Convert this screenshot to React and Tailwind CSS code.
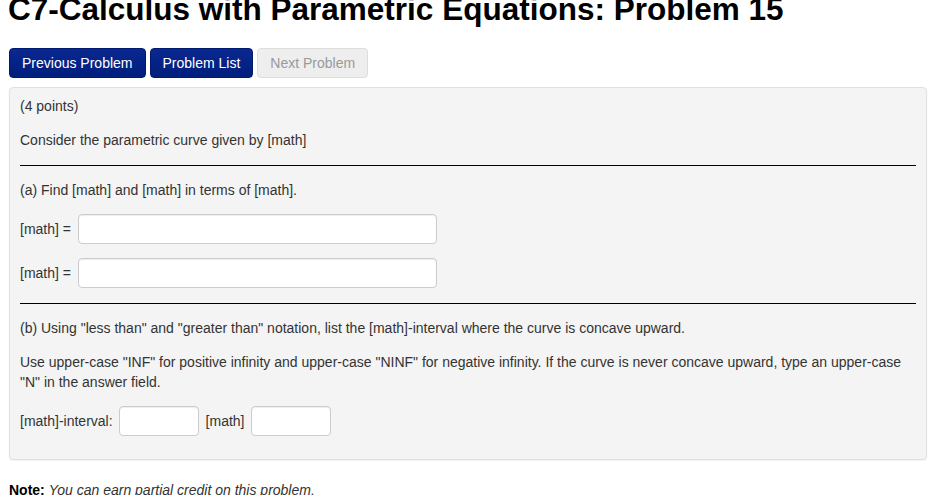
import React from 'react'

const font = { fontFamily: '"Liberation Sans", Arial, sans-serif' }

function Field({ className = 'w-[359px]' }) {
  return (
    <input
      type="text"
      className={`h-[30px] rounded-[4px] border border-[#cccccc] bg-white px-2 text-[14px] shadow-[inset_0_1px_1px_rgba(0,0,0,0.075)] outline-none ${className}`}
    />
  )
}

export default function App() {
  return (
    <div className="min-h-screen bg-white pl-[9px] pr-[3px] text-[14px] leading-[20px] text-[#333333]" style={font}>
      <h2 className="-mt-[7px] ml-[-1px] whitespace-nowrap text-[31.5px] font-bold leading-[32px] text-black">
        C7-Calculus with Parametric Equations: Problem 15
      </h2>

      <div className="mt-[23px] flex gap-[4px]">
        <button className="h-[30px] rounded-[4px] border border-[#001a6e] bg-gradient-to-b from-[#0a2890] to-[#001e7c] px-[12px] text-[14px] text-white">
          Previous Problem
        </button>
        <button className="h-[30px] rounded-[4px] border border-[#001a6e] bg-gradient-to-b from-[#0a2890] to-[#001e7c] px-[12px] text-[14px] text-white">
          Problem List
        </button>
        <button disabled className="h-[30px] rounded-[4px] border border-[#dddddd] bg-[#eeeeee] px-[12px] text-[14px] text-[#999999]">
          Next Problem
        </button>
      </div>

      <div className="mt-[9px] flex w-[918px] flex-col gap-[14px] rounded-[4px] border border-[#e0e0e0] bg-[#f4f4f4] pb-[23px] pl-[10px] pr-[10px] pt-[8px] shadow-[0_1px_1px_rgba(0,0,0,0.05)]">
        <p>(4 points)</p>
        <p>Consider the parametric curve given by [math]</p>
        <hr className="my-[0.5px] border-0 border-t border-black" />
        <p>(a) Find [math] and [math] in terms of [math].</p>
        <div className="flex items-center gap-[7px]">
          <span>[math] =</span>
          <Field />
        </div>
        <div className="flex items-center gap-[7px]">
          <span>[math] =</span>
          <Field />
        </div>
        <hr className="my-[0.5px] border-0 border-t border-black" />
        <p>(b) Using "less than" and "greater than" notation, list the [math]-interval where the curve is concave upward.</p>
        <p className="pr-[6px]">
          Use upper-case "INF" for positive infinity and upper-case "NINF" for negative infinity. If the curve is never concave upward, type an upper-case "N" in the answer field.
        </p>
        <div className="flex items-center">
          <span>[math]-interval:</span>
          <Field className="ml-[6px] w-[80px]" />
          <span className="ml-[7px]">[math]</span>
          <Field className="ml-[6px] w-[80px]" />
        </div>
      </div>

      <p className="mt-[20px]">
        <b className="text-black">Note:</b> <i>You can earn partial credit on this problem.</i>
      </p>
    </div>
  )
}
